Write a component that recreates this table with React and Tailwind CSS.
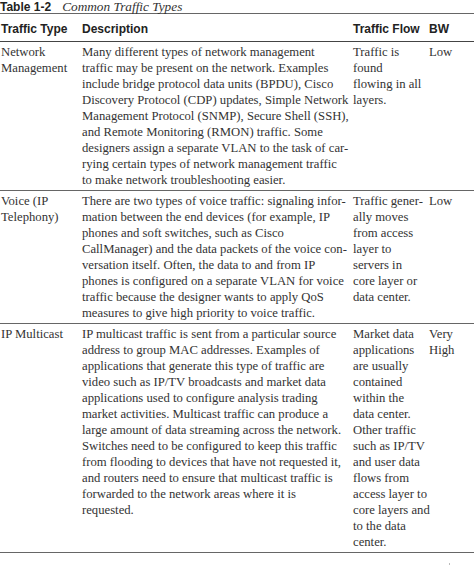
import React from 'react';

const rows = [
  {
    type: ['Network', 'Management'],
    desc: [
      'Many different types of network management',
      'traffic may be present on the network. Examples',
      'include bridge protocol data units (BPDU), Cisco',
      'Discovery Protocol (CDP) updates, Simple Network',
      'Management Protocol (SNMP), Secure Shell (SSH),',
      'and Remote Monitoring (RMON) traffic. Some',
      'designers assign a separate VLAN to the task of car-',
      'rying certain types of network management traffic',
      'to make network troubleshooting easier.',
    ],
    flow: ['Traffic is', 'found', 'flowing in all', 'layers.'],
    bw: ['Low'],
  },
  {
    type: ['Voice (IP', 'Telephony)'],
    desc: [
      'There are two types of voice traffic: signaling infor-',
      'mation between the end devices (for example, IP',
      'phones and soft switches, such as Cisco',
      'CallManager) and the data packets of the voice con-',
      'versation itself. Often, the data to and from IP',
      'phones is configured on a separate VLAN for voice',
      'traffic because the designer wants to apply QoS',
      'measures to give high priority to voice traffic.',
    ],
    flow: [
      'Traffic gener-',
      'ally moves',
      'from access',
      'layer to',
      'servers in',
      'core layer or',
      'data center.',
    ],
    bw: ['Low'],
  },
  {
    type: ['IP Multicast'],
    desc: [
      'IP multicast traffic is sent from a particular source',
      'address to group MAC addresses. Examples of',
      'applications that generate this type of traffic are',
      'video such as IP/TV broadcasts and market data',
      'applications used to configure analysis trading',
      'market activities. Multicast traffic can produce a',
      'large amount of data streaming across the network.',
      'Switches need to be configured to keep this traffic',
      'from flooding to devices that have not requested it,',
      'and routers need to ensure that multicast traffic is',
      'forwarded to the network areas where it is',
      'requested.',
    ],
    flow: [
      'Market data',
      'applications',
      'are usually',
      'contained',
      'within the',
      'data center.',
      'Other traffic',
      'such as IP/TV',
      'and user data',
      'flows from',
      'access layer to',
      'core layers and',
      'to the data',
      'center.',
    ],
    bw: ['Very', 'High'],
  },
];

const Lines = ({ lines, className = '' }) => (
  <div className={className}>
    {lines.map((l, i) => (
      <div key={i} className="whitespace-nowrap">
        {l}
      </div>
    ))}
  </div>
);

const cols = 'grid grid-cols-[82px_271px_76px_1fr]';

export default function App() {
  return (
    <div className="w-[474px] h-[565px] overflow-hidden bg-white text-[#333]">
      {/* Caption */}
      <div className="flex items-baseline leading-[12px] pt-[1px] border-b border-[#666]">
        <span className="text-[12px] font-bold text-[#222]" style={{ fontFamily: '"Liberation Sans", Arial, sans-serif' }}>
          Table 1-2
        </span>
        <span className="ml-[11px] text-[13.3px] italic" style={{ fontFamily: '"Liberation Serif", "Times New Roman", serif' }}>
          Common Traffic Types
        </span>
      </div>

      {/* Header */}
      <div
        className={`${cols} pt-[6.5px] pb-[4.5px] text-[12px] leading-[16px] font-bold text-[#222] border-b-[1.5px] border-[#444]`}
        style={{ fontFamily: '"Liberation Sans", Arial, sans-serif' }}
      >
        <div className="pl-[1px]">Traffic Type</div>
        <div>Description</div>
        <div>Traffic Flow</div>
        <div>BW</div>
      </div>

      {/* Body */}
      <div style={{ fontFamily: '"Liberation Serif", "Times New Roman", serif' }} className="text-[12.7px] leading-[16px]">
        {rows.map((r, i) => (
          <div key={i} className={`${cols} pt-[2px] pb-[2px] border-b border-[#666]`}>
            <Lines lines={r.type} className="pl-[1px]" />
            <Lines lines={r.desc} />
            <Lines lines={r.flow} />
            <Lines lines={r.bw} />
          </div>
        ))}
      </div>

      <div className="flex justify-end pr-[24px] pt-[10px]">
        <div className="w-[1px] h-[4px] bg-[#bbb]" />
      </div>
    </div>
  );
}
